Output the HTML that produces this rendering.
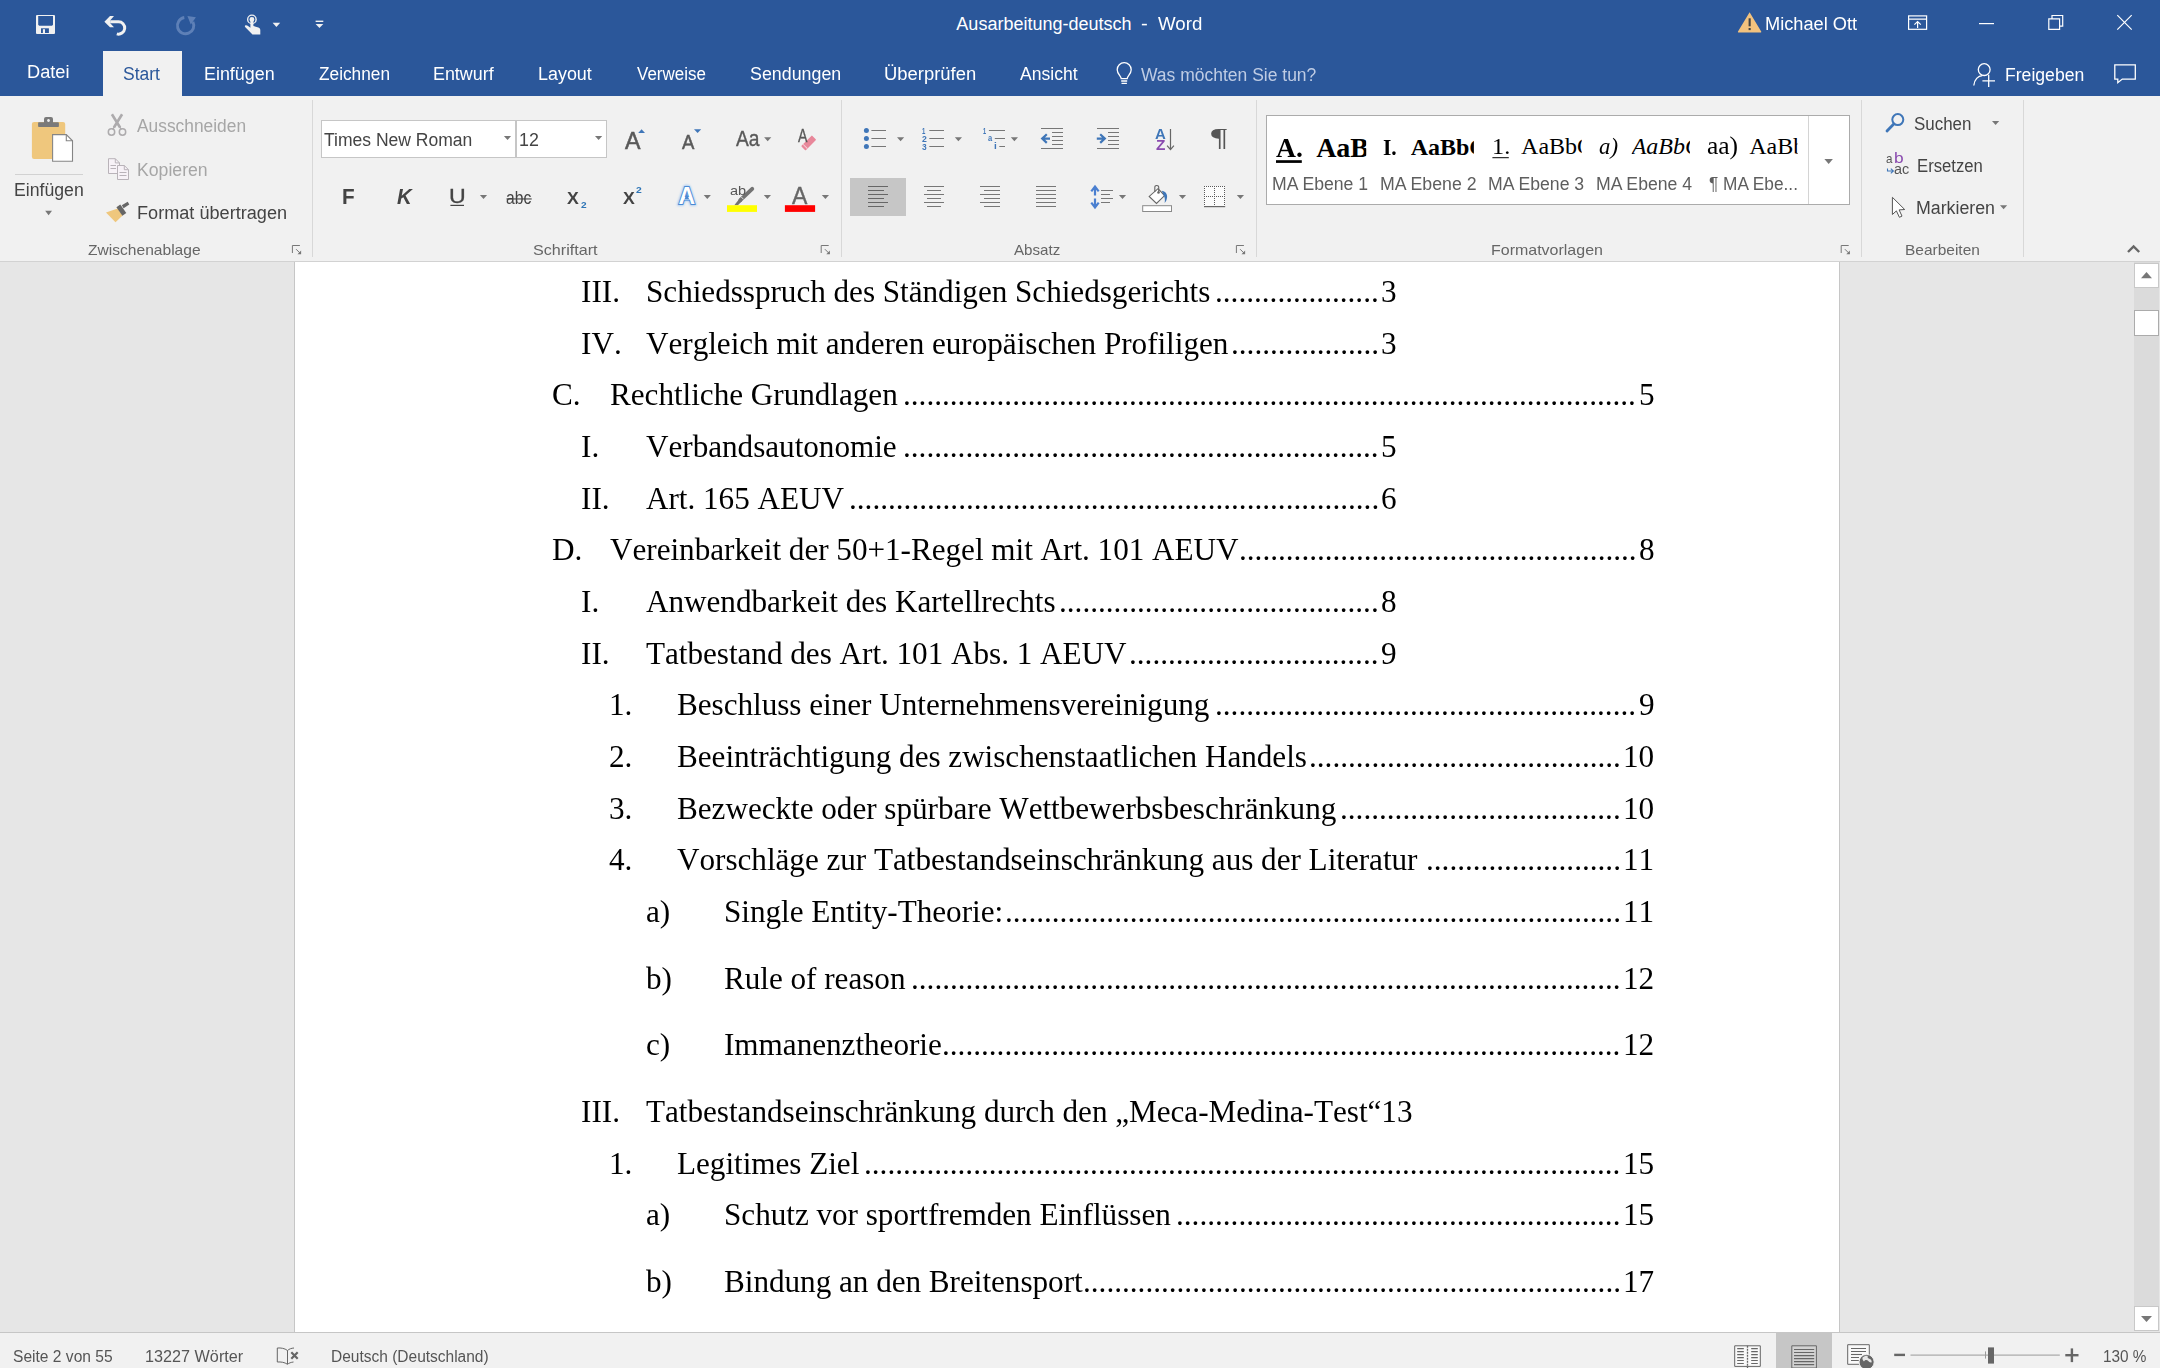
<!DOCTYPE html>
<html lang="de"><head><meta charset="utf-8"><title>Ausarbeitung-deutsch - Word</title>
<style>
html,body{margin:0;padding:0;background:#e6e6e6;}
body{width:2160px;height:1368px;overflow:hidden;position:relative;font-family:"Liberation Sans", sans-serif;}
.t{position:absolute;white-space:pre;line-height:1;transform-origin:0 0;}
.se{font-family:"Liberation Serif", serif;}
.b{position:absolute;}
svg{position:absolute;left:0;top:0;}

#tb{left:0;top:0;width:2160px;height:96px;background:#2b579a;}
#tabsel{left:103px;top:51px;width:79px;height:45px;background:#f1f1f1;}
#rib{left:0;top:96px;width:2160px;height:165px;background:#f1f1f1;}
#ribline{left:0;top:261px;width:2160px;height:1px;background:#d2d2d2;}
#docbg{left:0;top:262px;width:2160px;height:1070px;background:#e6e6e6;}
#page{left:294px;top:262px;width:1544px;height:1070px;background:#fff;border-left:1px solid #c6c6c6;border-right:1px solid #c6c6c6;box-sizing:content-box;}
#sbtrack{left:2134px;top:262px;width:25px;height:1069px;background:#dbdbdb;}
.sbb{left:2134px;width:23px;height:23px;background:#fff;border:1px solid #c8c8c8;}
#sbthumb{left:2134px;top:310px;width:23px;height:24px;background:#fff;border:1px solid #ababab;}
#stline{left:0;top:1332px;width:2160px;height:1px;background:#c6c6c6;}
#status{left:0;top:1333px;width:2160px;height:35px;background:#f1f1f1;}
#viewsel{left:1776px;top:1333px;width:56px;height:35px;background:#c6c6c6;}
.sep{width:1px;top:100px;height:157px;background:#d8d8d8;}
.cb{background:#fff;border:1px solid #c6c6c6;box-sizing:border-box;top:120px;height:38px;}
#alsel{left:850px;top:178px;width:56px;height:38px;background:#c6c6c6;}
#gal{left:1266px;top:115px;width:584px;height:90px;background:#fff;border:1px solid #ababab;box-sizing:border-box;}
#galsep{left:1808px;top:116px;width:1px;height:88px;background:#d4d4d4;}
.clip{position:absolute;overflow:hidden;top:116px;height:60px;}
.d{position:absolute;white-space:pre;line-height:1;font-kerning:none;will-change:transform;font-family:"Liberation Serif",serif;font-size:31.2px;color:#000;}

</style></head><body>

<div class="b" id="tb"></div>
<div class="b" id="tabsel"></div>
<div class="b" id="rib"></div>
<div class="b" id="ribline"></div>
<div class="b" id="docbg"></div>
<div class="b" id="page"></div>
<div class="b" id="sbtrack"></div>
<div class="b sbb" style="top:263px"></div>
<div class="b sbb" style="top:1306px"></div>
<div class="b" id="sbthumb"></div>
<div class="b" id="stline"></div>
<div class="b" id="status"></div>
<div class="b" id="viewsel"></div>
<div class="b sep" style="left:312px"></div>
<div class="b sep" style="left:841px"></div>
<div class="b sep" style="left:1256px"></div>
<div class="b sep" style="left:1861px"></div>
<div class="b sep" style="left:2023px"></div>
<div class="b cb" style="left:321px;width:195px"></div>
<div class="b cb" style="left:516px;width:91px"></div>
<div class="b" id="alsel"></div>
<div class="b" id="gal"></div>
<div class="b" id="galsep"></div>
<div class="b" style="left:15px;top:174px;width:68px;height:1px;background:#d2d2d2"></div>

<svg width="2160" height="1368" viewBox="0 0 2160 1368">
<path d="M37 15.1h17a1 1 0 0 1 1 1v17a1 1 0 0 1 -1 1h-17a1 1 0 0 1 -1 -1v-17a1 1 0 0 1 1 -1zM38.200 16.100v8.600l1 1h12.800l1 -1v-8.600z" fill="#f1f1f1" fill-rule="evenodd"/>
<rect x="41" y="28.300" width="7.900" height="4.700" fill="#2b579a"/><rect x="42.900" y="29.200" width="2.100" height="3.800" fill="#f1f1f1"/>
<path d="M104.400 21.700L110 16.100H114L110.300 20.250V23.250L114 27.200H110z" fill="#f1f1f1"/><path d="M110.200 21.750H118.200A6.200 6.200 0 1 1 116.800 33.900" fill="none" stroke="#f1f1f1" stroke-width="3"/>
<path d="M184.300 17.500A8.200 8.200 0 1 0 192.900 21.800" fill="none" stroke="#5e80b7" stroke-width="2.900"/><path d="M187.400 15.900L195.900 17.300L190.800 24.400z" fill="#5e80b7"/>
<circle cx="251.900" cy="19.400" r="4.900" fill="#f1f1f1"/><circle cx="251.900" cy="19.400" r="3" fill="none" stroke="#2b579a" stroke-width="1.100"/><path d="M250.400 19.700a1.500 1.500 0 0 1 3 0v6.300l5 1.600c1.200 .4 1.900 1.300 1.900 2.500v4.500h-7.800l-7.400 -7.700c-.4 -.5 -.3 -1 .1 -1.300c.6 -.5 1.700 -.4 2.500 .2l2.700 2z" fill="#f1f1f1"/>
<path d="M272.6 22.8h7.6l-3.80 4.2z" fill="#f1f1f1"/>
<rect x="315.600" y="20.600" width="7.700" height="1.400" fill="#f1f1f1"/>
<path d="M315.6 24.0h7.7l-3.85 3.9z" fill="#f1f1f1"/>
<path d="M1749.6 12.2L1761.2 31.4a0.800 0.800 0 0 1 -0.700 1.200H1738.700a0.800 0.800 0 0 1 -0.700 -1.200z" fill="#f2c27e"/><rect x="1748.6" y="18.3" width="2.1" height="8" fill="#444"/><rect x="1748.6" y="28" width="2.1" height="2.100" fill="#444"/>
<g fill="none" stroke="#fff" stroke-width="1.2"><rect x="1908.6" y="15.9" width="18" height="13.4"/><path d="M1908.6 19.2H1926.6M1917.6 21.8V28M1914.4 24.6L1917.6 21.6L1920.8 24.6"/><path d="M1979 23.6H1994"/><path d="M2048.8 18.8H2059.6V29.4H2048.8zM2052 18.600V15.500H2062.700V26.100H2059.800"/><path d="M2117.300 15.200L2131.700 29.600M2131.700 15.200L2117.300 29.600"/></g>
<g fill="none" stroke="#fff" stroke-width="1.3"><path d="M1121.200 78.600c0 -2.500 -4 -4.600 -4 -8.900a7 7 0 0 1 14 0c0 4.300 -4 6.400 -4 8.900z"/><path d="M1121.200 81H1127.200M1121.500 83.300H1126.900"/></g>
<g fill="none" stroke="#fff" stroke-width="1.3"><circle cx="1984.200" cy="69.600" r="5.900"/><path d="M1973.800 85.500c.5 -6 4.300 -9.800 8.600 -9.900"/><path d="M1982.400 80.900H1995M1988.700 74.700V87"/></g>
<path d="M2114.800 64.900H2135.300V79.100H2122.300L2117.800 82.700V79.100H2114.800z" fill="none" stroke="#fff" stroke-width="1.3"/><rect x="31.9" y="121.9" width="33.3" height="37.1" rx="2.2" fill="#efc77d"/><path d="M44 122.200v-3.200a2 2 0 0 1 2 -2h5a2 2 0 0 1 2 2v3.200h5.100a0.800 0.800 0 0 1 .8 .8v3.300a0.800 0.800 0 0 1 -.8 .8h-19.200a0.800 0.800 0 0 1 -.8 -.8v-3.300a0.800 0.800 0 0 1 .8 -.8zM48.500 119.100a1.400 1.400 0 1 0 0.010 0z" fill="#7a7a7a" fill-rule="evenodd"/><path d="M52.600 134.600H66.300L72.500 140.800V161.200H52.600z" fill="#fff" stroke="#858585" stroke-width="1.100"/><path d="M66.300 134.600V140.800H72.500" fill="none" stroke="#858585" stroke-width="1.100"/>
<path d="M45.2 210.8h6.8l-3.40 4.4z" fill="#777"/>
<g fill="none" stroke="#adabad"><path d="M111.900 114.300L120.100 127.500M122.100 114.300L113.900 127.500" stroke-width="2.600"/><path d="M119.800 127L121.300 129.400M114.200 127L112.700 129.400" stroke-width="1.400"/><circle cx="111.500" cy="132" r="3.200" stroke-width="1.500"/><circle cx="122.500" cy="132" r="3.200" stroke-width="1.500"/></g>
<g fill="#f7f2f7" stroke="#b9b3b9" stroke-width="1"><path d="M108.500 158.700H115.300L119.500 162.900V173.500H108.500z"/><path d="M115.300 158.700V162.900H119.500" fill="none"/><path d="M117.500 165.500H124.300L128.500 169.700V179.500H117.500z"/><path d="M124.300 165.500V169.700H128.500" fill="none"/><path d="M110.500 165.500H116M110.500 168.500H116M119.500 172.500H126.500M119.500 175.500H126.500" fill="none"/></g>
<path d="M106 212.600L117.700 208.600L122.600 215.600L115.500 222.200Z" fill="#efc77d"/><path d="M116.400 207.300L120.300 204.600L126.300 213L122.400 215.800Z" fill="#666"/><path d="M121.800 205.300L127.700 201.700L129.300 204.500L123.600 208.300Z" fill="#666"/>
<path d="M292.4 253.0V245.5H299.9M296.1 249.2L300.5 253.6" fill="none" stroke="#777" stroke-width="1"/><path d="M301.1 250.6V254.2H297.5z" fill="#777"/>
<path d="M821.2 253.0V245.5H828.7M824.9 249.2L829.3 253.6" fill="none" stroke="#777" stroke-width="1"/><path d="M829.9 250.6V254.2H826.3z" fill="#777"/>
<path d="M1236.4 253.0V245.5H1243.9M1240.1 249.2L1244.5 253.6" fill="none" stroke="#777" stroke-width="1"/><path d="M1245.1 250.6V254.2H1241.5z" fill="#777"/>
<path d="M1841.2 253.0V245.5H1848.7M1844.9 249.2L1849.3 253.6" fill="none" stroke="#777" stroke-width="1"/><path d="M1849.9 250.6V254.2H1846.3z" fill="#777"/>
<path d="M503.9 136.0h7.2l-3.60 4.1z" fill="#777"/>
<path d="M595.0 136.0h7.2l-3.60 4.1z" fill="#777"/>
<path d="M479.9 195.0h7.2l-3.60 4.1z" fill="#777"/>
<path d="M764.1 137.2h7.2l-3.60 4.1z" fill="#777"/>
<path d="M703.7 195.0h7.2l-3.60 4.1z" fill="#777"/>
<path d="M763.8 195.0h7.2l-3.60 4.1z" fill="#777"/>
<path d="M821.8 195.0h7.2l-3.60 4.1z" fill="#777"/>
<rect x="450.400" y="204.800" width="13.600" height="1.200" fill="#444"/><rect x="506.500" y="198.400" width="25.200" height="1.100" fill="#444"/>
<path d="M638.200 132.900L641.600 129.300L645 132.900z" fill="#3f76b8"/><path d="M694 129.300h7.200l-3.600 3.600z" fill="#3f76b8"/>
<g transform="rotate(-45 808.7 142.9)"><rect x="801.100" y="139.800" width="15.200" height="6.200" rx="0.800" fill="#e8879a"/><rect x="803.300" y="139.800" width="0.900" height="6.200" fill="#f6d4da"/></g>
<path d="M752.200 188.900L740.300 200.100" stroke="#737373" stroke-width="4" stroke-linecap="round" fill="none"/><path d="M741.300 197L743.500 199.300" stroke="#f1f1f1" stroke-width="0.800"/><path d="M739.600 198.400L742.200 201.100L737.800 205.200H734.300z" fill="#737373"/>
<rect x="727" y="205.200" width="30" height="6.700" fill="#ffff00"/><rect x="784.900" y="205.200" width="30.200" height="6.700" fill="#ff0000"/><circle cx="866.4" cy="130.5" r="2.5" fill="#3f76b8"/>
<circle cx="866.4" cy="138.5" r="2.5" fill="#3f76b8"/>
<circle cx="866.4" cy="146.5" r="2.5" fill="#3f76b8"/>
<path d="M871.4 130.5H886.0M871.4 138.5H886.0M871.4 146.5H886.0" stroke="#777" stroke-width="1" fill="none"/>
<path d="M897.0 137.2h7.2l-3.60 4.1z" fill="#777"/>
<path d="M929.3 130.5H944.0M929.3 138.5H944.0M929.3 146.5H944.0" stroke="#777" stroke-width="1" fill="none"/>
<path d="M954.8 137.2h7.2l-3.60 4.1z" fill="#777"/>
<path d="M988.9 130.500H1005M994.800 138.500H1005M999.300 146.500H1005" stroke="#777" fill="none"/>
<path d="M1010.8 137.2h7.2l-3.60 4.1z" fill="#777"/>
<path d="M1041.0 128.5H1063.0M1041.0 148.5H1063.0" stroke="#777" stroke-width="1" fill="none"/>
<path d="M1052.0 132.5H1063.0M1052.0 136.5H1063.0M1052.0 140.5H1063.0M1052.0 144.5H1063.0" stroke="#777" stroke-width="1" fill="none"/>
<path d="M1050 138.600H1043M1046.800 134.300L1042.200 138.600L1046.800 142.900" fill="none" stroke="#3f76b8" stroke-width="2.200"/>
<path d="M1097.0 128.5H1119.0M1097.0 148.5H1119.0" stroke="#777" stroke-width="1" fill="none"/>
<path d="M1108.0 132.5H1119.0M1108.0 136.5H1119.0M1108.0 140.5H1119.0M1108.0 144.5H1119.0" stroke="#777" stroke-width="1" fill="none"/>
<path d="M1096.800 138.600H1104M1100.200 134.300L1104.800 138.600L1100.200 142.900" fill="none" stroke="#3f76b8" stroke-width="2.200"/>
<path d="M1170.500 129V149.500M1167.100 145.600L1170.500 149.600L1173.900 145.600" fill="none" stroke="#666" stroke-width="1.200"/>
<path d="M868 186.5H888M868 190.5H884M868 194.5H888M868 198.5H884M868 202.5H888M868 206.5H884" stroke="#666" fill="none"/>
<path d="M924 186.5H944M927 190.5H941M924 194.5H944M927 198.5H941M924 202.5H944M927 206.5H941" stroke="#777" fill="none"/>
<path d="M980 186.5H1000M984 190.5H1000M980 194.5H1000M984 198.5H1000M980 202.5H1000M984 206.5H1000" stroke="#777" fill="none"/>
<path d="M1036.0 186.5H1056.0M1036.0 190.5H1056.0M1036.0 194.5H1056.0M1036.0 198.5H1056.0M1036.0 202.5H1056.0M1036.0 206.5H1056.0" stroke="#777" stroke-width="1" fill="none"/>
<path d="M1095 186.400V195.600M1091.300 191.400L1095 186.600L1098.700 191.400M1095 198.400V207.600M1091.300 202.600L1095 207.400L1098.700 202.600" fill="none" stroke="#4a7fd0" stroke-width="2.200"/>
<path d="M1101 190.500H1113M1101 194.500H1110M1101 198.500H1113M1101 202.500H1110" stroke="#777" fill="none"/>
<path d="M1118.9 195.0h7.2l-3.60 4.1z" fill="#777"/>
<path d="M1158 188.700L1164.600 195.600L1156.500 203.400L1149.200 196.400z" fill="#fff" stroke="#666" stroke-width="1.100"/><path d="M1154.800 192V187.200a1.700 1.700 0 0 1 1.700 -1.700h0.500a1.700 1.700 0 0 1 1.700 1.700V192.200" fill="none" stroke="#666" stroke-width="1.100"/><circle cx="1158.500" cy="192.500" r="1.300" fill="#666"/><path d="M1161.800 190.700C1165 191 1167.400 193.600 1167.100 197C1166.900 199.500 1166 201.600 1164.700 202.900C1165.200 199.500 1164.800 197.400 1163.600 195.300z" fill="#3f76b8"/><rect x="1142.700" y="205.700" width="28.800" height="5.800" fill="#fff" stroke="#8a8a8a" stroke-width="1"/>
<path d="M1178.9 195.0h7.2l-3.60 4.1z" fill="#777"/>
<rect x="1204" y="186" width="21" height="20" fill="#fbfbfb"/><path d="M1204 186.500H1225M1204 196.500H1225" fill="none" stroke="#5a5a5a" stroke-width="1" stroke-dasharray="1 1"/><path d="M1204.500 186V206M1214.500 186V206M1224.500 186V206" fill="none" stroke="#5a5a5a" stroke-width="1" stroke-dasharray="1 1"/><path d="M1204 206.600H1225.200" stroke="#666" stroke-width="1.200" fill="none"/>
<path d="M1236.8 195.0h7.2l-3.60 4.1z" fill="#777"/>
<path d="M1824.4 159.0h8.5l-4.25 5.0z" fill="#777"/>
<circle cx="1897.800" cy="119.600" r="5.500" fill="none" stroke="#3f76b8" stroke-width="2"/><path d="M1893.800 124L1887 131" stroke="#3f76b8" stroke-width="2.800" stroke-linecap="round"/>
<path d="M1992.0 120.9h7.2l-3.60 4.1z" fill="#777"/>
<path d="M2000.0 205.2h7.2l-3.60 4.1z" fill="#777"/>
<path d="M1892.400 197.300V214.500L1896.400 210.900L1899.400 217.300L1902 216.100L1899.100 209.900L1904.700 209.500z" fill="#fff" stroke="#555" stroke-width="1" stroke-linejoin="miter"/>
<path d="M1887.500 168.500v2.500h5.500M1890.800 168.600l2.600 2.400l-2.600 2.400" fill="none" stroke="#3f76b8" stroke-width="1.100"/>
<path d="M2128 252L2133.600 246.400L2139.200 252" fill="none" stroke="#666" stroke-width="2.400"/>
<path d="M2141 278.200L2146.500 272L2152 278.200z" fill="#777"/><path d="M2141 1316L2152 1316L2146.500 1322z" fill="#777"/><path d="M1734.700 1366.400V1345.800H1760.300V1366.400z" fill="#f9f9f9" stroke="#666" stroke-width="1"/><path d="M1747.500 1345.800V1368" stroke="#666" stroke-width="1.300" stroke-dasharray="2 1"/>
<path d="M1737.2 1348.6H1743.8M1737.2 1351.6H1743.8M1737.2 1354.6H1743.8M1737.2 1357.6H1743.8M1737.2 1360.5H1743.8M1737.2 1363.5H1743.8" stroke="#666" stroke-width="1.1" fill="none"/>
<path d="M1751.2 1348.6H1757.8M1751.2 1351.6H1757.8M1751.2 1354.6H1757.8M1751.2 1357.6H1757.8M1751.2 1360.5H1757.8M1751.2 1363.5H1757.8" stroke="#666" stroke-width="1.1" fill="none"/>
<path d="M1791.800 1368V1345.800H1816.400V1368z" fill="#d2d2d2" stroke="#666" stroke-width="1"/>
<path d="M1794.0 1349.5H1814.2M1794.0 1352.5H1814.2M1794.0 1355.6H1814.2M1794.0 1358.6H1814.2M1794.0 1361.6H1814.2M1794.0 1364.6H1814.2" stroke="#666" stroke-width="1.2" fill="none"/>
<path d="M1847.700 1344.700H1869.300V1364.300H1847.700z" fill="#f9f9f9" stroke="#666" stroke-width="1"/>
<path d="M1851.0 1348.5H1866.0M1851.0 1351.5H1866.0" stroke="#666" stroke-width="1.1" fill="none"/>
<path d="M1851.0 1354.5H1862.0" stroke="#666" stroke-width="1.1" fill="none"/>
<path d="M1851.0 1357.5H1859.0M1851.0 1360.5H1859.0" stroke="#666" stroke-width="1.1" fill="none"/>
<circle cx="1866.600" cy="1362" r="7.600" fill="#666" stroke="#f1f1f1" stroke-width="1"/><path d="M1862.600 1357.500c1.800 -1.600 3.600 -2 5.200 -1.600c-.8 1.600 .4 2.600 2 3c1.500 .5 2.300 2 1.700 3.600c-1.500 .3 -2.400 -.4 -3.200 -1.400c-1.200 -1.500 -3.300 -1.200 -4.300 .4c-1.300 -1.200 -1.900 -2.700 -1.400 -4z" fill="#e6e6e6"/>
<rect x="1894.200" y="1353.700" width="10.800" height="2.400" fill="#666"/><rect x="1910.500" y="1354.600" width="149.300" height="1" fill="#9a9a9a"/><rect x="1985" y="1351.400" width="1" height="7.200" fill="#9a9a9a"/><rect x="1988" y="1347.400" width="6" height="16.200" fill="#666"/><rect x="2065.300" y="1354" width="13.200" height="2.400" fill="#666"/><rect x="2070.700" y="1348.400" width="2.400" height="13.700" fill="#666"/>
<path d="M287.500 1350.500C284.500 1348.200 281 1347.800 277.300 1348V1362C281 1361.800 284.500 1362.200 287.500 1364.300C289 1363 291 1362.300 293.500 1362M287.500 1350.500C289 1349 291.500 1348.200 294 1348" fill="none" stroke="#666" stroke-width="1"/><path d="M287.500 1350.500V1364" stroke="#666" stroke-width="1"/><path d="M291.300 1352.300L297.700 1358.700M297.700 1352.300L291.300 1358.700" stroke="#666" stroke-width="2.200"/><defs><filter id="gl" x="-30%" y="-30%" width="160%" height="160%"><feGaussianBlur stdDeviation="0.9"/></filter></defs><g font-family="Liberation Sans, sans-serif" font-weight="700" font-size="23"><text x="678.500" y="204" fill="none" stroke="#9cc4f2" stroke-width="3" filter="url(#gl)">A</text><text x="678.500" y="204" fill="#fff" stroke="#4a8ad4" stroke-width="1.800" style="paint-order:stroke">A</text></g><path d="M686.800 193.400L689.100 199.300H684.500z" fill="#4a8ad4"/><path d="M1276 160.200h25.800v2.700h-25.800z" fill="#000"/><path d="M1492.400 157.200h16.400v1h-16.400z" fill="#000"/>
</svg>
<span class="t" style="left:956.36px;top:15px;font-size:18px;color:#fff;">Ausarbeitung-deutsch</span><span class="t" style="left:1141.13px;top:15px;font-size:18px;color:#fff;transform:scaleX(1.1287);">-</span><span class="t" style="left:1158.23px;top:15px;font-size:18px;color:#fff;transform:scaleX(1.0374);">Word</span><span class="t" style="left:1765.21px;top:15px;font-size:18px;color:#fff;transform:scaleX(1.0119);">Michael Ott</span><span class="t" style="left:27.21px;top:63px;font-size:18px;color:#fff;transform:scaleX(1.0108);">Datei</span><span class="t" style="left:123.22px;top:65px;font-size:18px;color:#2b579a;transform:scaleX(0.9706);">Start</span><span class="t" style="left:204.03px;top:65px;font-size:18px;color:#fff;transform:scaleX(0.9934);">Einfügen</span><span class="t" style="left:318.66px;top:65px;font-size:18px;color:#fff;transform:scaleX(0.9592);">Zeichnen</span><span class="t" style="left:433.23px;top:65px;font-size:18px;color:#fff;transform:scaleX(0.9935);">Entwurf</span><span class="t" style="left:538.33px;top:65px;font-size:18px;color:#fff;transform:scaleX(0.9952);">Layout</span><span class="t" style="left:636.93px;top:65px;font-size:18px;color:#fff;transform:scaleX(0.9421);">Verweise</span><span class="t" style="left:749.70px;top:65px;font-size:18px;color:#fff;transform:scaleX(0.9907);">Sendungen</span><span class="t" style="left:884.00px;top:65px;font-size:18px;color:#fff;transform:scaleX(1.0235);">Überprüfen</span><span class="t" style="left:1020.27px;top:65px;font-size:18px;color:#fff;transform:scaleX(0.9765);">Ansicht</span><span class="t" style="left:1140.53px;top:66px;font-size:18px;color:#bfcce4;transform:scaleX(0.9717);">Was möchten Sie tun?</span><span class="t" style="left:2005.16px;top:66px;font-size:18px;color:#fff;transform:scaleX(0.9779);">Freigeben</span><span class="t" style="left:13.75px;top:181px;font-size:18px;color:#444;transform:scaleX(0.9817);">Einfügen</span><span class="t" style="left:137.27px;top:117px;font-size:18px;color:#a6a6a6;transform:scaleX(0.9642);">Ausschneiden</span><span class="t" style="left:136.65px;top:161px;font-size:18px;color:#a6a6a6;transform:scaleX(0.9808);">Kopieren</span><span class="t" style="left:136.61px;top:204px;font-size:18px;color:#444;transform:scaleX(1.0064);">Format übertragen</span><span class="t" style="left:88.41px;top:242px;font-size:15px;color:#666;transform:scaleX(1.0386);">Zwischenablage</span><span class="t" style="left:532.78px;top:242px;font-size:15px;color:#666;transform:scaleX(1.0753);">Schriftart</span><span class="t" style="left:1014.47px;top:242px;font-size:15px;color:#666;transform:scaleX(1.0091);">Absatz</span><span class="t" style="left:1491.29px;top:242px;font-size:15px;color:#666;transform:scaleX(1.0655);">Formatvorlagen</span><span class="t" style="left:1904.63px;top:242px;font-size:15px;color:#666;transform:scaleX(1.0317);">Bearbeiten</span><span class="t" style="left:324.22px;top:131px;font-size:18px;color:#444;transform:scaleX(0.9733);">Times New Roman</span><span class="t" style="left:519.24px;top:131px;font-size:18px;color:#444;transform:scaleX(0.9913);">12</span><span class="t" style="left:342.23px;top:186px;font-size:22.5px;color:#444;font-weight:700;transform:scaleX(0.9190);">F</span><span class="t" style="left:396.84px;top:186px;font-size:22.5px;color:#444;font-weight:700;font-style:italic;transform:scaleX(0.9056);">K</span><span class="t" style="left:448.84px;top:185px;font-size:21px;color:#444;transform:scaleX(1.1022);-webkit-text-stroke:0.3px #444;">U</span><span class="t" style="left:506.36px;top:189px;font-size:18px;color:#444;transform:scaleX(0.8691);">abc</span><span class="t" style="left:567.16px;top:190px;font-size:17px;color:#444;font-weight:700;transform:scaleX(1.0401);">X</span><span class="t" style="left:580.66px;top:201px;font-size:8.5px;color:#2e75b6;font-weight:700;transform:scaleX(1.1901);">2</span><span class="t" style="left:623.36px;top:190px;font-size:17px;color:#444;font-weight:700;transform:scaleX(1.0401);">X</span><span class="t" style="left:636.46px;top:186px;font-size:8.5px;color:#2e75b6;font-weight:700;transform:scaleX(1.2144);">2</span><span class="t" style="left:625.25px;top:129px;font-size:24.5px;color:#595959;transform:scaleX(0.9466);-webkit-text-stroke:0.55px #595959;">A</span><span class="t" style="left:681.96px;top:132px;font-size:20.5px;color:#595959;transform:scaleX(0.9035);-webkit-text-stroke:0.5px #595959;">A</span><span class="t" style="left:735.66px;top:129px;font-size:21.5px;color:#595959;transform:scaleX(0.8940);-webkit-text-stroke:0.35px #595959;">Aa</span><span class="t" style="left:797.57px;top:127px;font-size:18px;color:#595959;transform:scaleX(0.7864);-webkit-text-stroke:0.3px #595959;">A</span><span class="t" style="left:791.86px;top:184px;font-size:24px;color:#666;transform:scaleX(0.9600);-webkit-text-stroke:0.4px #666;">A</span><span class="t" style="left:730.00px;top:184px;font-size:13.5px;color:#555;transform:scaleX(1.0774);">ab</span><span class="t" style="left:1914.14px;top:115px;font-size:18px;color:#444;transform:scaleX(0.9408);">Suchen</span><span class="t" style="left:1916.63px;top:157px;font-size:18px;color:#444;transform:scaleX(0.9267);">Ersetzen</span><span class="t" style="left:1916.44px;top:199px;font-size:18px;color:#444;transform:scaleX(0.9869);">Markieren</span><span class="t" style="left:1272.15px;top:175px;font-size:18px;color:#5e5e5e;transform:scaleX(0.9798);">MA Ebene 1</span><span class="t" style="left:1380.35px;top:175px;font-size:18px;color:#5e5e5e;transform:scaleX(0.9844);">MA Ebene 2</span><span class="t" style="left:1488.15px;top:175px;font-size:18px;color:#5e5e5e;transform:scaleX(0.9808);">MA Ebene 3</span><span class="t" style="left:1596.35px;top:175px;font-size:18px;color:#5e5e5e;transform:scaleX(0.9794);">MA Ebene 4</span><span class="t" style="left:1708.93px;top:175px;font-size:18px;color:#5e5e5e;transform:scaleX(0.9592);">¶ MA Ebe...</span><span class="t" style="left:13.30px;top:1349px;font-size:16px;color:#555;transform:scaleX(0.9739);">Seite 2 von 55</span><span class="t" style="left:144.77px;top:1349px;font-size:16px;color:#555;transform:scaleX(1.0129);">13227 Wörter</span><span class="t" style="left:331.03px;top:1349px;font-size:16px;color:#555;transform:scaleX(0.9686);">Deutsch (Deutschland)</span><span class="t" style="left:2102.63px;top:1349px;font-size:16px;color:#555;transform:scaleX(0.9589);">130 %</span><span class="t" style="left:922.43px;top:127px;font-size:9px;color:#3f76b8;font-weight:700;transform:scaleX(0.6665);">1</span><span class="t" style="left:921.91px;top:135px;font-size:9px;color:#3f76b8;font-weight:700;transform:scaleX(0.9634);">2</span><span class="t" style="left:922.02px;top:143px;font-size:9px;color:#3f76b8;font-weight:700;transform:scaleX(0.9333);">3</span><span class="t" style="left:982.65px;top:127px;font-size:9px;color:#3f76b8;font-weight:700;transform:scaleX(0.6189);">1</span><span class="t" style="left:987.68px;top:134px;font-size:9px;color:#3f76b8;font-weight:700;transform:scaleX(0.8335);">a</span><span class="t" style="left:993.91px;top:142px;font-size:9px;color:#3f76b8;font-weight:700;transform:scaleX(1.1218);">i</span><span class="t" style="left:1155.05px;top:126px;font-size:15.5px;color:#3f76b8;font-weight:700;transform:scaleX(0.9670);">A</span><span class="t" style="left:1155.75px;top:138px;font-size:14px;color:#8a4baf;font-weight:700;transform:scaleX(1.0984);">Z</span><span class="t se" style="left:1211.16px;top:125px;font-size:25px;color:#555;transform:scaleX(1.4290);">¶</span><span class="t" style="left:1886.42px;top:152px;font-size:13px;color:#555;transform:scaleX(0.8951);">a</span><span class="t" style="left:1893.89px;top:151px;font-size:14px;color:#8a4baf;transform:scaleX(1.2349);">b</span><span class="t" style="left:1894.41px;top:162px;font-size:14px;color:#555;transform:scaleX(1.0315);">ac</span><span class="t se" style="left:1276.13px;top:134px;font-size:28px;color:#000;font-weight:700;transform:scaleX(0.9861);">A.</span><span class="t se" style="left:1316.13px;top:134px;font-size:28px;color:#000;font-weight:700;clip-path:polygon(0 -20%,50.1px -20%,50.1px 130%,0 130%);">AaBbCc</span><span class="t se" style="left:1383.09px;top:136px;font-size:23px;color:#000;font-weight:700;transform:scaleX(0.9353);">I.</span><span class="t se" style="left:1410.67px;top:135px;font-size:24px;color:#000;font-weight:700;clip-path:polygon(0 -20%,63.2px -20%,63.2px 130%,0 130%);">AaBbCc</span><span class="t se" style="left:1491.77px;top:134px;font-size:24px;color:#000;transform:scaleX(1.0109);">1.</span><span class="t se" style="left:1521.07px;top:134px;font-size:24px;color:#000;clip-path:polygon(0 -20%,60.6px -20%,60.6px 130%,0 130%);">AaBbCc</span><span class="t se" style="left:1598.93px;top:135px;font-size:23px;color:#000;font-style:italic;transform:scaleX(0.9894);">a)</span><span class="t se" style="left:1631.70px;top:134px;font-size:24px;color:#000;font-style:italic;clip-path:polygon(0 -20%,58.2px -20%,58.2px 130%,0 130%);">AaBbCc</span><span class="t se" style="left:1706.90px;top:133px;font-size:25px;color:#000;transform:scaleX(1.0187);">aa)</span><span class="t se" style="left:1749.27px;top:134px;font-size:24px;color:#000;clip-path:polygon(0 -20%,48.3px -20%,48.3px 130%,0 130%);">AaBbCc</span>
<span class="d" style="left:580.70px;top:276px">III.</span>
<span class="d" style="left:645.50px;top:276px;letter-spacing:-0.03px">Schiedsspruch des Ständigen Schiedsgerichts</span>
<span class="d" style="left:1381.40px;top:276px">3</span>
<span class="d" style="left:1215.10px;top:276px">.....................</span>
<span class="d" style="left:580.70px;top:328px">IV.</span>
<span class="d" style="left:645.50px;top:328px;letter-spacing:-0.03px">Vergleich mit anderen europäischen Profiligen</span>
<span class="d" style="left:1381.40px;top:328px">3</span>
<span class="d" style="left:1230.70px;top:328px">...................</span>
<span class="d" style="left:551.60px;top:379px">C.</span>
<span class="d" style="left:609.50px;top:379px;letter-spacing:-0.03px">Rechtliche Grundlagen</span>
<span class="d" style="left:1639.00px;top:379px">5</span>
<span class="d" style="left:903.10px;top:379px">..............................................................................................</span>
<span class="d" style="left:580.70px;top:431px">I.</span>
<span class="d" style="left:645.50px;top:431px;letter-spacing:-0.03px">Verbandsautonomie</span>
<span class="d" style="left:1381.40px;top:431px">5</span>
<span class="d" style="left:903.10px;top:431px">.............................................................</span>
<span class="d" style="left:580.70px;top:483px">II.</span>
<span class="d" style="left:645.50px;top:483px;letter-spacing:-0.03px">Art. 165 AEUV</span>
<span class="d" style="left:1381.40px;top:483px">6</span>
<span class="d" style="left:848.50px;top:483px">....................................................................</span>
<span class="d" style="left:551.60px;top:534px">D.</span>
<span class="d" style="left:609.50px;top:534px;letter-spacing:-0.03px">Vereinbarkeit der 50+1-Regel mit Art. 101 AEUV</span>
<span class="d" style="left:1639.00px;top:534px">8</span>
<span class="d" style="left:1238.50px;top:534px">...................................................</span>
<span class="d" style="left:580.70px;top:586px">I.</span>
<span class="d" style="left:645.50px;top:586px;letter-spacing:-0.03px">Anwendbarkeit des Kartellrechts</span>
<span class="d" style="left:1381.40px;top:586px">8</span>
<span class="d" style="left:1059.10px;top:586px">.........................................</span>
<span class="d" style="left:580.70px;top:638px">II.</span>
<span class="d" style="left:645.50px;top:638px;letter-spacing:-0.03px">Tatbestand des Art. 101 Abs. 1 AEUV</span>
<span class="d" style="left:1381.40px;top:638px">9</span>
<span class="d" style="left:1129.30px;top:638px">................................</span>
<span class="d" style="left:609.20px;top:689px">1.</span>
<span class="d" style="left:677.00px;top:689px;letter-spacing:-0.03px">Beschluss einer Unternehmensvereinigung</span>
<span class="d" style="left:1639.00px;top:689px">9</span>
<span class="d" style="left:1215.10px;top:689px">......................................................</span>
<span class="d" style="left:609.20px;top:741px">2.</span>
<span class="d" style="left:677.00px;top:741px;letter-spacing:-0.03px">Beeinträchtigung des zwischenstaatlichen Handels</span>
<span class="d" style="left:1623.40px;top:741px">10</span>
<span class="d" style="left:1308.70px;top:741px">........................................</span>
<span class="d" style="left:609.20px;top:793px">3.</span>
<span class="d" style="left:677.00px;top:793px;letter-spacing:-0.03px">Bezweckte oder spürbare Wettbewerbsbeschränkung</span>
<span class="d" style="left:1623.40px;top:793px">10</span>
<span class="d" style="left:1339.90px;top:793px">....................................</span>
<span class="d" style="left:609.20px;top:844px">4.</span>
<span class="d" style="left:677.00px;top:844px;letter-spacing:-0.03px">Vorschläge zur Tatbestandseinschränkung aus der Literatur</span>
<span class="d" style="left:1623.40px;top:844px">11</span>
<span class="d" style="left:1425.70px;top:844px">.........................</span>
<span class="d" style="left:645.50px;top:896px">a)</span>
<span class="d" style="left:723.70px;top:896px;letter-spacing:-0.03px">Single Entity-Theorie:</span>
<span class="d" style="left:1623.40px;top:896px">11</span>
<span class="d" style="left:1004.50px;top:896px">...............................................................................</span>
<span class="d" style="left:645.50px;top:963px">b)</span>
<span class="d" style="left:723.70px;top:963px;letter-spacing:-0.03px">Rule of reason</span>
<span class="d" style="left:1623.40px;top:963px">12</span>
<span class="d" style="left:910.90px;top:963px">...........................................................................................</span>
<span class="d" style="left:645.50px;top:1029px">c)</span>
<span class="d" style="left:723.70px;top:1029px;letter-spacing:-0.03px">Immanenztheorie</span>
<span class="d" style="left:1623.40px;top:1029px">12</span>
<span class="d" style="left:942.10px;top:1029px">.......................................................................................</span>
<span class="d" style="left:580.70px;top:1096px">III.</span>
<span class="d" style="left:645.50px;top:1096px;letter-spacing:-0.03px">Tatbestandseinschränkung durch den „Meca-Medina-Test“13</span>
<span class="d" style="left:609.20px;top:1148px">1.</span>
<span class="d" style="left:677.00px;top:1148px;letter-spacing:-0.03px">Legitimes Ziel</span>
<span class="d" style="left:1623.40px;top:1148px">15</span>
<span class="d" style="left:864.10px;top:1148px">.................................................................................................</span>
<span class="d" style="left:645.50px;top:1199px">a)</span>
<span class="d" style="left:723.70px;top:1199px;letter-spacing:-0.03px">Schutz vor sportfremden Einflüssen</span>
<span class="d" style="left:1623.40px;top:1199px">15</span>
<span class="d" style="left:1176.10px;top:1199px">.........................................................</span>
<span class="d" style="left:645.50px;top:1266px">b)</span>
<span class="d" style="left:723.70px;top:1266px;letter-spacing:-0.03px">Bindung an den Breitensport</span>
<span class="d" style="left:1623.40px;top:1266px">17</span>
<span class="d" style="left:1082.50px;top:1266px">.....................................................................</span>
</body></html>
